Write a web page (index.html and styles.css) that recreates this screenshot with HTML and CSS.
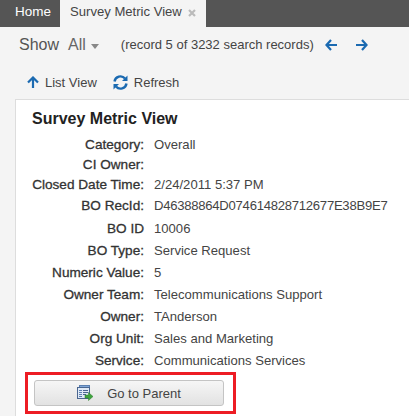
FILE: index.html
```html
<!DOCTYPE html>
<html lang="en">
<head>
    <meta charset="UTF-8">
    <title>Survey Metric View</title>
    <link rel="stylesheet" href="styles.css">
</head>
<body>
    <div class="tabs">
        <div class="tab">Home</div>
        <div class="tab active">
            Survey Metric View
            <svg class="close" width="8" height="8" viewBox="0 0 8 8"><path d="M1 1l6 6M7 1l-6 6" stroke="#bbb" stroke-width="2.2"/></svg>
        </div>
    </div>
    <div class="pager">
        <span class="show">Show</span>
        <span class="all">All</span>
        <span class="caret"></span>
        <span class="records">(record 5 of 3232 search records)</span>
        <svg class="arrow prev" width="12" height="12" viewBox="0 0 12 12"><path d="M6 1 1.5 6 6 11M2 6h10" fill="none" stroke="#1b6ab1" stroke-width="2.2"/></svg>
        <svg class="arrow next" width="12" height="12" viewBox="0 0 12 12"><path d="M6 1l4.500 5L6 11M10 6H0" fill="none" stroke="#1b6ab1" stroke-width="2.2"/></svg>
    </div>
    <div class="actions">
        <span class="action">
            <svg width="12" height="12" viewBox="0 0 12 12"><path d="M1 6.500 6 1.500l5 5M6 2v10" fill="none" stroke="#1b6ab1" stroke-width="2.2"/></svg>
            List View
        </span>
        <span class="action">
            <svg width="15" height="15" viewBox="0 0 15 15"><path d="M1.500 6.500A6 6 0 0 1 12 3.500" fill="none" stroke="#1b6ab1" stroke-width="2.400"/><path d="M14.500.5V6H9z" fill="#1b6ab1"/><path d="M13.500 8.500A6 6 0 0 1 3 11.500" fill="none" stroke="#1b6ab1" stroke-width="2.400"/><path d="M.5 14.500V9H6z" fill="#1b6ab1"/></svg>
            Refresh
        </span>
    </div>
    <div class="panel">
        <h2>Survey Metric View</h2>
        <div class="fields">
            <div class="label">Category:</div><div class="value">Overall</div>
            <div class="label">CI Owner:</div><div class="value"></div>
            <div class="label">Closed Date Time:</div><div class="value">2/24/2011 5:37 PM</div>
            <div class="label">BO RecId:</div><div class="value rec-id">D46388864D074614828712677E38B9E7</div>
            <div class="label">BO ID</div><div class="value">10006</div>
            <div class="label">BO Type:</div><div class="value">Service Request</div>
            <div class="label">Numeric Value:</div><div class="value">5</div>
            <div class="label">Owner Team:</div><div class="value">Telecommunications Support</div>
            <div class="label">Owner:</div><div class="value">TAnderson</div>
            <div class="label">Org Unit:</div><div class="value">Sales and Marketing</div>
            <div class="label">Service:</div><div class="value">Communications Services</div>
        </div>
        <div class="highlight">
            <div class="button">
                <svg width="16" height="16" viewBox="0 0 16 16">
                    <rect x="2.500" y="0.500" width="10" height="3" fill="#7fa6d8" stroke="#5b7fb0"/>
                    <rect x="0.500" y="2.500" width="12" height="11" fill="#dfe9f6" stroke="#4a6690"/>
                    <path d="M2 5h3v1H2zM2 7h3v1H2zM2 9h3v1H2zM2 11h3v1H2z" fill="#5b7fb0"/>
                    <path d="M6 5.500h5M6 7.500h5M6 9.500h3" stroke="#4a6690"/>
                    <path d="M8 10h3.500V7.500L16 11.500l-4.500 4V13H8z" fill="#3ea33e" stroke="#2b7f2b" stroke-width=".5"/>
                </svg>
                <span>Go to Parent</span>
            </div>
        </div>
    </div>
</body>
</html>
```

FILE: styles.css
```css
body {
    margin: 0;
    height: 416px;
    overflow: hidden;
    background-color: #f4f4f4;
    font-family: "Liberation Sans", Arial, sans-serif;
    color: #333;
}
.tabs {
    display: flex;
    height: 27px;
    background-color: #555;
}
.tab {
    padding: 0 9px 0 15px;
    line-height: 23px;
    font-size: 13.5px;
    color: #fff;
    white-space: nowrap;
}
.tab.active {
    display: flex;
    align-items: flex-start;
    gap: 6px;
    height: 27px;
    padding: 0 10px;
    background-color: #f4f4f4;
    font-size: 13.1px;
    color: #444;
}
.close {
    flex-shrink: 0;
    margin-top: 9px;
}
.pager {
    display: flex;
    align-items: center;
    height: 35px;
    padding-left: 19px;
}
.show, .all {
    font-size: 16px;
    color: #555;
}
.all {
    margin-left: 9px;
    color: #666;
}
.caret {
    margin: 3px 0 0 5px;
    border-left: 4.5px solid transparent;
    border-right: 4.5px solid transparent;
    border-top: 5px solid #888;
}
.records {
    margin-left: 22px;
    font-size: 13px;
    color: #444;
}
.arrow.prev {
    margin-left: 11px;
}
.arrow.next {
    margin-left: 19px;
}
.actions {
    display: flex;
    gap: 16px;
    height: 27px;
    padding: 10px 0 0 27px;
}
.action {
    display: flex;
    align-items: center;
    gap: 6px;
    height: 20px;
    font-size: 13px;
    color: #444;
}
.panel {
    margin-left: 15px;
    height: 320px;
    padding: 10px 0 0 16px;
    background-color: #fff;
    border: 1px solid #ddd;
    border-right: none;
}
h2 {
    margin: 0 0 7px;
    font-size: 16px;
    line-height: 18px;
    color: #222;
}
.fields {
    display: grid;
    grid-template-columns: 113px 1fr;
    grid-template-rows: 20px 20px 21px 23px repeat(6, 22px) 21px;
    column-gap: 10px;
    margin-left: -1px;
    font-size: 13.1px;
    line-height: 20px;
}
.label {
    text-align: right;
    font-size: 13.6px;
    color: #333;
    white-space: nowrap;
    -webkit-text-stroke: 0.3px #333;
}
.value {
    color: #444;
    white-space: nowrap;
}
.rec-id {
    letter-spacing: -0.26px;
}
.highlight {
    box-sizing: border-box;
    width: 211px;
    height: 42px;
    margin-left: -7px;
    padding: 5px 6px;
    border: 3px solid #ed1c24;
}
.button {
    display: flex;
    align-items: center;
    justify-content: center;
    gap: 14px;
    box-sizing: border-box;
    width: 190px;
    height: 26px;
    border: 1px solid #c4c4c4;
    border-radius: 3px;
    background: linear-gradient(#f6f6f6, #e2e2e2);
    font-size: 13px;
    color: #444;
}
```
